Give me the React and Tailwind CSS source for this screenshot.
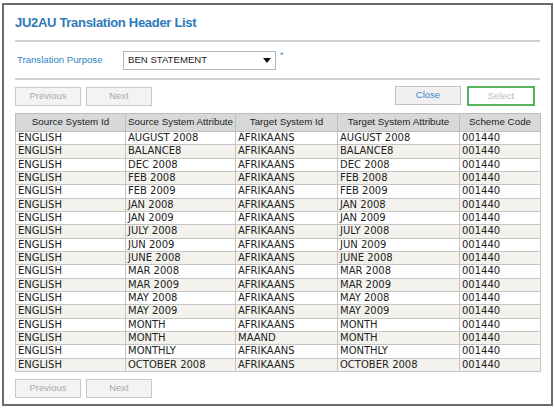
import React from "react";

const rows = [
  ["ENGLISH", "AUGUST 2008", "AFRIKAANS", "AUGUST 2008", "001440"],
  ["ENGLISH", "BALANCE8", "AFRIKAANS", "BALANCE8", "001440"],
  ["ENGLISH", "DEC 2008", "AFRIKAANS", "DEC 2008", "001440"],
  ["ENGLISH", "FEB 2008", "AFRIKAANS", "FEB 2008", "001440"],
  ["ENGLISH", "FEB 2009", "AFRIKAANS", "FEB 2009", "001440"],
  ["ENGLISH", "JAN 2008", "AFRIKAANS", "JAN 2008", "001440"],
  ["ENGLISH", "JAN 2009", "AFRIKAANS", "JAN 2009", "001440"],
  ["ENGLISH", "JULY 2008", "AFRIKAANS", "JULY 2008", "001440"],
  ["ENGLISH", "JUN 2009", "AFRIKAANS", "JUN 2009", "001440"],
  ["ENGLISH", "JUNE 2008", "AFRIKAANS", "JUNE 2008", "001440"],
  ["ENGLISH", "MAR 2008", "AFRIKAANS", "MAR 2008", "001440"],
  ["ENGLISH", "MAR 2009", "AFRIKAANS", "MAR 2009", "001440"],
  ["ENGLISH", "MAY 2008", "AFRIKAANS", "MAY 2008", "001440"],
  ["ENGLISH", "MAY 2009", "AFRIKAANS", "MAY 2009", "001440"],
  ["ENGLISH", "MONTH", "AFRIKAANS", "MONTH", "001440"],
  ["ENGLISH", "MONTH", "MAAND", "MONTH", "001440"],
  ["ENGLISH", "MONTHLY", "AFRIKAANS", "MONTHLY", "001440"],
  ["ENGLISH", "OCTOBER 2008", "AFRIKAANS", "OCTOBER 2008", "001440"],
];

const headers = [
  ["Source System Id", "w-[110px]"],
  ["Source System Attribute", "w-[110px]"],
  ["Target System Id", "w-[102px]"],
  ["Target System Attribute", "w-[122px]"],
  ["Scheme Code", "w-[81px]"],
];

function Btn({ children, className = "" }) {
  return (
    <div
      className={
        "h-[19px] flex items-center justify-center text-[9.5px] font-['Liberation_Sans',sans-serif] " +
        className
      }
    >
      {children}
    </div>
  );
}

function PagerButtons() {
  return (
    <div className="flex gap-[5px]">
      <Btn className="w-[66px] bg-[#f3f3f3] border border-[#c9c9c9] text-[#a9a9a9]">Previous</Btn>
      <Btn className="w-[66px] bg-[#f3f3f3] border border-[#c9c9c9] text-[#a9a9a9]">Next</Btn>
    </div>
  );
}

export default function App() {
  return (
    <div className="w-[554px] h-[408px] bg-white pl-[2px] pt-[3px]">
      <div className="w-[551px] h-[403px] border-2 border-[#6a6a6a] pl-[11px] pr-[10px] flex flex-col">
        <div className="h-[35px] flex items-center text-[13px] tracking-[-0.3px] font-bold text-[#2d79b9] font-['Liberation_Sans',sans-serif]">
          JU2AU Translation Header List
        </div>
        <div className="h-[2px] bg-[#cfcfcf] w-[525px]" />
        <div className="h-[36px] flex items-center">
          <div className="w-[108px] pl-[2px] text-[9.6px] text-[#2f86c4] font-['Liberation_Sans',sans-serif]">
            Translation Purpose
          </div>
          <div className="w-[153px] h-[19px] border border-[#b5b5b5] bg-white flex items-center justify-between pl-[4px] pr-[4px] text-[9.6px] text-[#222] font-['Liberation_Sans',sans-serif]">
            <span>BEN STATEMENT</span>
            <svg width="8" height="5" viewBox="0 0 8 5">
              <path d="M0 0 L8 0 L4 5 Z" fill="#111" />
            </svg>
          </div>
          <div className="ml-[4px] -mt-[8px] text-[9px] text-[#2f86c4] font-['Liberation_Sans',sans-serif]">*</div>
        </div>
        <div className="h-[2px] bg-[#cfcfcf] w-[525px]" />
        <div className="flex items-center justify-between w-[525px] mt-[6px]">
          <PagerButtons />
          <div className="flex gap-[6px] mr-[5px]">
            <Btn className="w-[66px] bg-[#f0f0f0] border border-[#c2c2c2] text-[#3b88c8]">Close</Btn>
            <Btn className="w-[68px] h-[20px] bg-white border-2 border-[#58b358] text-[#bdbdbd]">Select</Btn>
          </div>
        </div>
        <table className="mt-[7px] w-[525px] border-collapse table-fixed border border-[#bdbdbd]">
          <thead>
            <tr className="h-[18px] bg-[#d8d8d8]">
              {headers.map(([h, w]) => (
                <th
                  key={h}
                  className={
                    w +
                    " p-0 border border-[#bdbdbd] text-center font-normal text-[9.8px] text-[#222] font-['Liberation_Sans',sans-serif] whitespace-nowrap"
                  }
                >
                  {h}
                </th>
              ))}
            </tr>
          </thead>
          <tbody>
            {rows.map((r, i) => (
              <tr key={i} className={"h-[13.33px] " + (i % 2 === 1 ? "bg-[#f3f2ec]" : "bg-white")}>
                {r.map((c, j) => (
                  <td
                    key={j}
                    className="p-0 pl-[2px] border border-[#c4c4c4] text-[10px] leading-[12px] text-[#222] font-['DejaVu_Sans',sans-serif] whitespace-nowrap"
                  >
                    {c}
                  </td>
                ))}
              </tr>
            ))}
          </tbody>
        </table>
        <div className="mt-[7px]">
          <PagerButtons />
        </div>
      </div>
    </div>
  );
}
